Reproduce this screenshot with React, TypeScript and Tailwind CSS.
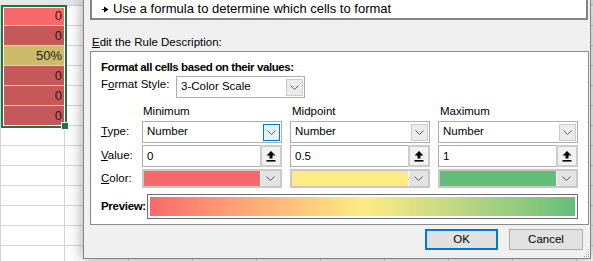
import React from 'react';

const UI_FONT = "font-['Liberation_Sans',Arial,sans-serif]";

const cellFills: { bg: string; text: string }[] = [
  { bg: 'bg-[#f8696b]', text: '0' },
  { bg: 'bg-[#c6585a]', text: '0' },
  { bg: 'bg-[#cbbb6b]', text: '50%' },
  { bg: 'bg-[#c6585a]', text: '0' },
  { bg: 'bg-[#c6585a]', text: '0' },
  { bg: 'bg-[#c6585a]', text: '0' },
];

const Chevron = () => (
  <svg width="9" height="5" viewBox="0 0 9 5">
    <path d="M0.5 0.5 L4.5 4.5 L8.5 0.5" fill="none" stroke="#5a5a5a" strokeWidth="1" />
  </svg>
);

const UploadIcon = () => (
  <svg width="10" height="11" viewBox="0 0 10 11">
    <path d="M5 0 L9.5 4.5 L6.5 4.5 L6.5 7.5 L3.5 7.5 L3.5 4.5 L0.5 4.5 Z" fill="#000" />
    <rect x="0.5" y="9" width="9" height="1.6" fill="#000" />
  </svg>
);

const Dropdown: React.FC<{ value: string; width: string; focused?: boolean }> = ({ value, width, focused }) => (
  <div className={`${width} h-[22px] flex items-center border border-[#adadad] bg-white`}>
    <span className="flex-1 pl-[4px] text-[#000]">{value}</span>
    <div
      className={`w-[17px] h-[17px] mr-[1px] flex items-center justify-center border ${
        focused ? 'border-[#0078d7] bg-[#e5f1fb]' : 'border-[#cccccc] bg-[#ececec]'
      }`}
    >
      <Chevron />
    </div>
  </div>
);

const ValueInput: React.FC<{ value: string }> = ({ value }) => (
  <div className="w-[140px] h-[22px] flex border border-[#adadad] bg-white">
    <span className="flex-1 pl-[4px] leading-[20px]">{value}</span>
    <div className="w-[22px] bg-[#cccccc] p-[2px] -my-px -mr-px h-[22px]">
      <div className="w-full h-full bg-[#f2f2f2] flex items-center justify-center">
        <UploadIcon />
      </div>
    </div>
  </div>
);

const ColorCombo: React.FC<{ color: string }> = ({ color }) => (
  <div className="w-[140px] h-[19px] flex border-2 border-[#c8c8c8] bg-white">
    <div className={`flex-1 ${color}`} />
    <div className="w-[19px] ml-px bg-[#e3e3e3] flex items-center justify-center">
      <Chevron />
    </div>
  </div>
);

const Spreadsheet = () => (
  <div className="flex flex-col">
    <div className="h-[6px] bg-[#e6e6e6] border-b border-[#d0d0d0]" />
    {Array.from({ length: 13 }).map((_, r) => (
      <div key={r} className="flex h-[20px] shrink-0">
        <div className="w-[2px] h-full border-r border-b border-[#d4d4d4]" />
        {Array.from({ length: 10 }).map((_, c) => {
          const fill = c === 0 ? cellFills[r] : undefined;
          return (
            <div
              key={c}
              className={`w-[64px] shrink-0 h-full border-r border-b border-[#d4d4d4] flex items-center justify-end pr-[2px] text-[13px] text-[#2a1a1a] font-['Liberation_Sans',Arial,sans-serif] ${
                fill ? fill.bg : 'bg-white'
              }`}
            >
              {fill?.text}
            </div>
          );
        })}
      </div>
    ))}
  </div>
);

export default function App() {
  return (
    <div className="relative w-[593px] h-[261px] overflow-hidden bg-white">
      <Spreadsheet />

      {/* selection outline */}
      <div className="absolute left-[1px] top-[5px] w-[66px] h-[123px] border-2 border-[#217346] shadow-[inset_0_0_0_1px_#ffffff]" />
      <div className="absolute left-[62px] top-[123px] w-[6px] h-[6px] bg-[#217346] outline outline-1 outline-white" />

      {/* dialog */}
      <div
        className={`absolute left-[83px] top-0 w-[508px] h-[259px] bg-[#f0f0f0] border-x border-b border-[#858585] shadow-[0_0_14px_rgba(0,0,0,0.4)] text-[11.5px] text-black ${UI_FONT}`}
      >
        <div className="ml-[6px] w-[498px] h-[20px] bg-white border-x-2 border-b-2 border-[#838383] flex items-center">
          <span className="ml-[10px] mr-[4px] flex items-center">
            <svg width="7" height="7" viewBox="0 0 7 7">
              <rect x="0" y="3" width="2" height="1" fill="#000" />
              <path d="M2 0.5 L6.5 3.5 L2 6.5 Z" fill="#000" />
            </svg>
          </span>
          <span className="text-[13px]">Use a formula to determine which cells to format</span>
        </div>

        <div className="ml-[8px] mt-[15px] h-[15px] leading-[15px]">
          <span className="underline">E</span>dit the Rule Description:
        </div>

        <div className="ml-[6px] mt-[1px] w-[499px] h-[174px] bg-white border border-[#8a8a8a] pl-[10px]">
          <div className="mt-[8px] h-[15px] leading-[15px] font-bold tracking-[-0.4px]">
            Format all cells based on their values:
          </div>

          <div className="mt-[1px] flex items-start">
            <div className="w-[75px] h-[15px] leading-[15px] mt-[1px]">
              F<span className="underline">o</span>rmat Style:
            </div>
            <Dropdown value="3-Color Scale" width="w-[129px]" />
          </div>

          <div className="mt-[6px] flex h-[15px] leading-[15px]">
            <div className="w-[41px]" />
            <div className="w-[140px] pl-[1px]">Minimum</div>
            <div className="w-[140px] ml-[8px] pl-[2px]">Midpoint</div>
            <div className="w-[140px] ml-[8px] pl-[2px]">Maximum</div>
          </div>

          <div className="mt-[2px] flex items-center gap-[8px]">
            <div className="w-[33px]">
              <span className="underline">T</span>ype:
            </div>
            <Dropdown value="Number" width="w-[140px]" focused />
            <Dropdown value="Number" width="w-[140px]" />
            <Dropdown value="Number" width="w-[140px]" />
          </div>

          <div className="mt-[2px] flex items-center gap-[8px]">
            <div className="w-[33px]">
              <span className="underline">V</span>alue:
            </div>
            <ValueInput value="0" />
            <ValueInput value="0.5" />
            <ValueInput value="1" />
          </div>

          <div className="mt-[2px] flex items-center gap-[8px]">
            <div className="w-[33px]">
              <span className="underline">C</span>olor:
            </div>
            <ColorCombo color="bg-[#f8696b]" />
            <ColorCombo color="bg-[#ffeb84]" />
            <ColorCombo color="bg-[#63be7b]" />
          </div>

          <div className="mt-[6px] flex items-center h-[25px]">
            <div className="w-[46px] font-bold tracking-[-0.3px]">Preview:</div>
            <div className="w-[431px] h-[25px] border border-[#6d6d6d] bg-white p-[2px]">
              <div className="w-full h-full bg-gradient-to-r from-[#f8696b] via-[#ffeb84] to-[#63be7b]" />
            </div>
          </div>
        </div>

        <div className="mt-[4px] flex justify-end gap-[11px] pr-[7px]">
          <button className="w-[73px] h-[21px] border-2 border-[#0078d7] bg-[#e1e1e1] text-[11.5px]">OK</button>
          <button className="w-[74px] h-[21px] border border-[#adadad] bg-[#e1e1e1] text-[11.5px]">Cancel</button>
        </div>

        {/* resize grip */}
        <div className="absolute right-[1px] bottom-[1px] grid grid-cols-3 gap-[1px]">
          <span className="w-[1px] h-[1px]" />
          <span className="w-[1px] h-[1px]" />
          <span className="w-[1px] h-[1px] bg-[#a0a0a0]" />
          <span className="w-[1px] h-[1px]" />
          <span className="w-[1px] h-[1px] bg-[#a0a0a0]" />
          <span className="w-[1px] h-[1px] bg-[#a0a0a0]" />
          <span className="w-[1px] h-[1px] bg-[#a0a0a0]" />
          <span className="w-[1px] h-[1px] bg-[#a0a0a0]" />
          <span className="w-[1px] h-[1px] bg-[#a0a0a0]" />
        </div>
      </div>
    </div>
  );
}
